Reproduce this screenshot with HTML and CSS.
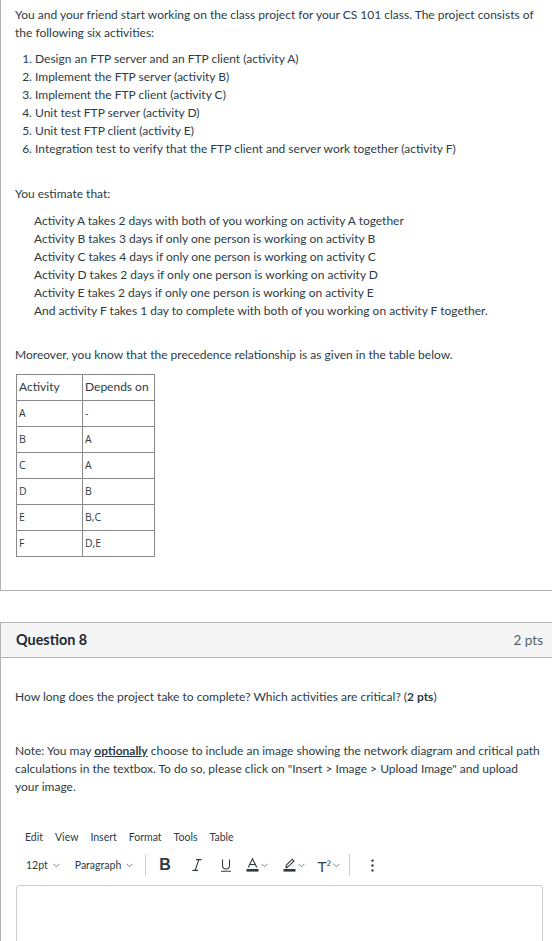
FILE: index.html
```html
<!DOCTYPE html>
<html lang="en">
<head>
<meta charset="utf-8">
<title>Quiz</title>
<link rel="stylesheet" href="styles.css">
</head>
<body>
<div class="panel prev">
  <p class="intro">You and your friend start working on the class project for your CS 101 class. The project consists of the following six activities:</p>
  <ol class="steps">
    <li>Design an FTP server and an FTP client (activity A)</li>
    <li>Implement the FTP server (activity B)</li>
    <li>Implement the FTP client (activity C)</li>
    <li>Unit test FTP server (activity D)</li>
    <li>Unit test FTP client (activity E)</li>
    <li>Integration test to verify that the FTP client and server work together (activity F)</li>
  </ol>
  <p class="estimate">You estimate that:</p>
  <div class="durations">
    <div>Activity A takes 2 days with both of you working on activity A together</div>
    <div>Activity B takes 3 days if only one person is working on activity B</div>
    <div>Activity C takes 4 days if only one person is working on activity C</div>
    <div>Activity D takes 2 days if only one person is working on activity D</div>
    <div>Activity E takes 2 days if only one person is working on activity E</div>
    <div>And activity F takes 1 day to complete with both of you working on activity F together.</div>
  </div>
  <p class="moreover">Moreover, you know that the precedence relationship is as given in the table below.</p>
  <table class="deps">
    <thead>
      <tr><th class="c1">Activity</th><th>Depends on</th></tr>
    </thead>
    <tbody>
      <tr><td>A</td><td>-</td></tr>
      <tr><td>B</td><td>A</td></tr>
      <tr><td>C</td><td>A</td></tr>
      <tr><td>D</td><td>B</td></tr>
      <tr><td>E</td><td>B,C</td></tr>
      <tr><td>F</td><td>D,E</td></tr>
    </tbody>
  </table>
</div>

<div class="panel question">
  <div class="q-header">
    <span class="q-name">Question 8</span>
    <span class="q-points">2 pts</span>
  </div>
  <div class="q-body">
    <p class="ask">How long does the project take to complete? Which activities are critical? (<strong>2 pts</strong>)</p>
    <p class="note">Note: You may <strong class="ul">optionally</strong> choose to include an image showing the network diagram and critical path calculations in the textbox. To do so, please click on "Insert &gt; Image &gt; Upload Image" and upload your image.</p>

    <div class="rce">
      <div class="menubar">
        <span>Edit</span><span>View</span><span>Insert</span><span>Format</span><span>Tools</span><span>Table</span>
      </div>
      <div class="toolbar">
        <span class="tb-select">12pt<svg class="chev" width="7" height="5" viewBox="0 0 7 5"><path d="M0.5 0.8 L3.5 3.8 L6.5 0.8" /></svg></span>
        <span class="tb-select para">Paragraph<svg class="chev" width="7" height="5" viewBox="0 0 7 5"><path d="M0.5 0.8 L3.5 3.8 L6.5 0.8" /></svg></span>
        <span class="sep sep1"></span>
        <span class="tb-b">B</span>
        <svg class="tb-i" width="10" height="12" viewBox="0 0 10 12"><path d="M4 0.6 H9.6 M0.4 11.4 H6 M6.8 0.6 L3.2 11.4" /></svg>
        <svg class="tb-u" width="12" height="13" viewBox="0 0 12 13"><path d="M2.5 0.5 V6.5 A3.5 3.5 0 0 0 9.5 6.5 V0.5 M1 12.3 H11" /></svg>
        <span class="tb-split tb-color">
          <svg width="13" height="14" viewBox="0 0 13 14"><path class="stroke" d="M2.2 9.6 L6.5 0.8 L10.8 9.6 M3.8 6.5 H9.2" /><rect x="0.5" y="11" width="12" height="2.6" /></svg>
          <svg class="chev" width="7" height="5" viewBox="0 0 7 5"><path d="M0.5 0.8 L3.5 3.8 L6.5 0.8" /></svg>
        </span>
        <span class="tb-split tb-hl">
          <svg width="13" height="14" viewBox="0 0 13 14"><path class="stroke" d="M3 9.2 L3.6 6.8 L9.2 1.2 L11 3 L5.4 8.6 Z M2.4 9.6 H4.6" /><rect x="0.5" y="11" width="12" height="2.6" /></svg>
          <svg class="chev" width="7" height="5" viewBox="0 0 7 5"><path d="M0.5 0.8 L3.5 3.8 L6.5 0.8" /></svg>
        </span>
        <span class="tb-split tb-sup">
          <span class="sup-t">T<sup>2</sup></span>
          <svg class="chev" width="7" height="5" viewBox="0 0 7 5"><path d="M0.5 0.8 L3.5 3.8 L6.5 0.8" /></svg>
        </span>
        <span class="sep sep2"></span>
        <svg class="tb-more" width="3" height="13" viewBox="0 0 3 13"><circle cx="1.5" cy="1.6" r="1.2"/><circle cx="1.5" cy="6.5" r="1.2"/><circle cx="1.5" cy="11.4" r="1.2"/></svg>
      </div>
      <div class="editor-area"></div>
    </div>
  </div>
</div>
</body>
</html>
```

FILE: styles.css
```css
* { box-sizing: border-box; }
html, body { margin: 0; padding: 0; background: #fff; overflow: hidden; }
body {
  font-family: Lato, "Open Sans", sans-serif;
  font-size: 12px;
  line-height: 18px;
  color: #2d3b45;
}
p { margin: 0; }

.panel { border-left: 1px solid #b3b3b3; }

.prev {
  border-bottom: 1px solid #b3b3b3;
  padding: 6px 0 33px 14px;
}
.steps { margin: 8px 0 0; padding-left: 20px; }
.estimate { margin-top: 27px; }
.durations { margin: 9px 0 0 19px; }
.moreover { margin-top: 26px; }

.deps {
  margin: 10px 0 0 1px;
  border-collapse: collapse;
  table-layout: fixed;
  width: 139px;
}
.deps th, .deps td {
  border: 1px solid #8a8a8a;
  padding: 3px 2px 4px;
  text-align: left;
  font-weight: normal;
  vertical-align: middle;
  line-height: 18px;
}
.deps th { font-family: Lato, sans-serif; font-size: 12px; }
.deps th.c1 { width: 66px; }
.deps td { font-family: "Open Sans", sans-serif; font-size: 10.5px; }

.question {
  margin-top: 31px;
  border-top: 1px solid #b3b3b3;
}
.q-header {
  height: 35px;
  background: #f5f5f5;
  border-bottom: 1px solid #b3b3b3;
  display: flex;
  align-items: center;
  justify-content: space-between;
  padding: 0 9px 0 15px;
}
.q-name { font-weight: 700; font-size: 14.4px; color: #1f2a33; }
.q-points { font-size: 13.5px; color: #555f67; }

.q-body { padding: 30px 0 0 14px; }
.note { margin-top: 36px; padding-right: 8px; }
.ul { text-decoration: underline; }

.rce { margin: 32px 0 0 1px; }
.menubar {
  display: flex;
  gap: 12px;
  padding-left: 9px;
  font-size: 10.5px;
  height: 18px;
  line-height: 18px;
  color: #2d3b45;
}
.toolbar {
  margin-top: 7px;
  height: 24px;
  display: flex;
  align-items: center;
  padding-left: 10px;
  font-size: 10.5px;
  color: #2d3b45;
}
.chev path { fill: none; stroke: #7a848c; stroke-width: 1; }
.tb-select { display: inline-flex; align-items: center; gap: 5px; }
.para { margin-left: 15px; }
.sep { width: 1px; height: 22px; background: #cfcfcf; }
.sep1 { margin-left: 12px; }
.tb-b {
  margin-left: 13px;
  font-family: "Liberation Sans", Arial, sans-serif;
  font-weight: 700;
  font-size: 16px;
  line-height: 16px;
  color: #2d3b45;
}
.tb-i { margin-left: 21px; }
.tb-i path, .tb-u path, .stroke { fill: none; stroke: #2d3b45; stroke-width: 1.1; }
.tb-u { margin-left: 18px; }
.tb-split { display: inline-flex; align-items: center; gap: 2px; }
.tb-split rect { fill: #2d3b45; }
.tb-color { margin-left: 14px; }
.tb-hl { margin-left: 15px; }
.tb-sup { margin-left: 13px; }
.sup-t {
  font-family: "DejaVu Sans", sans-serif;
  font-size: 14px;
  line-height: 14px;
  font-weight: 400;
  color: #2d3b45;
}
.sup-t sup { font-size: 7.5px; vertical-align: 6px; }
.sep2 { margin-left: 9px; }
.tb-more { margin-left: 21px; fill: #2d3b45; }

.editor-area {
  margin-top: 8px;
  width: 527px;
  height: 120px;
  border: 1px solid #cccccc;
  border-radius: 3px;
}
```
